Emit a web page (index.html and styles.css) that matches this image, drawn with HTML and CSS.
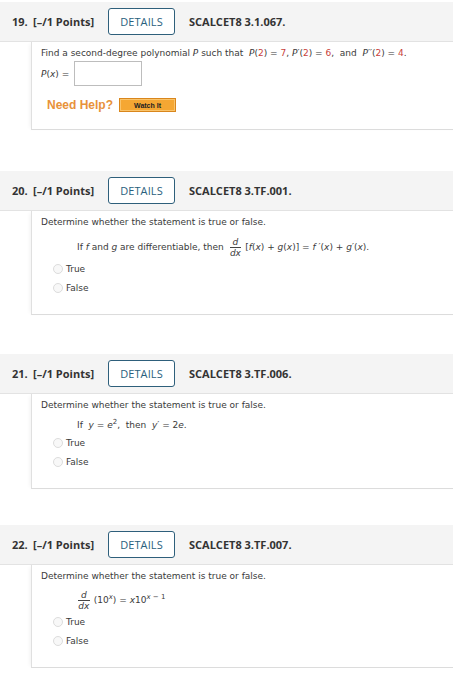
FILE: index.html
```html
<!DOCTYPE html>
<html>
<head>
<meta charset="utf-8">
<link rel="stylesheet" href="styles.css">
</head>
<body>
<div class="page">

  <section class="q q19">
    <div class="qhead">
      <span class="num">19.</span>
      <span class="pts">[–/1 Points]</span>
      <span class="details">DETAILS</span>
      <span class="code">SCALCET8 3.1.067.</span>
    </div>
    <div class="qbody">
      <p class="line">Find a second-degree polynomial <i>P</i> such that&nbsp; <i>P</i>(<span class="red">2</span>) = <span class="red">7</span>, <i>P</i>′(<span class="red">2</span>) = <span class="red">6</span>,&nbsp; and&nbsp; <i>P</i>′′(<span class="red">2</span>) = <span class="red">4</span>.</p>
      <div class="answer"><span><i>P</i>(<i>x</i>) =</span><span class="input"></span></div>
      <div class="help"><span class="needhelp">Need Help?</span><span class="watch">Watch It</span></div>
    </div>
  </section>

  <section class="q q20">
    <div class="qhead">
      <span class="num">20.</span>
      <span class="pts">[–/1 Points]</span>
      <span class="details">DETAILS</span>
      <span class="code">SCALCET8 3.TF.001.</span>
    </div>
    <div class="qbody">
      <p class="line">Determine whether the statement is true or false.</p>
      <div class="stmt frac-stmt">If <i>f</i> and <i>g</i> are differentiable, then&nbsp;<span class="frac"><span class="fn"><i>d</i></span><span class="fd"><i>dx</i></span></span>[<i>f</i>(<i>x</i>)&nbsp;+&nbsp;<i>g</i>(<i>x</i>)]&nbsp;=&nbsp;<i>f</i>&nbsp;′(<i>x</i>)&nbsp;+&nbsp;<i>g</i>′(<i>x</i>).</div>
      <div class="opt"><span class="radio"></span>True</div>
      <div class="opt"><span class="radio"></span>False</div>
    </div>
  </section>

  <section class="q q21">
    <div class="qhead">
      <span class="num">21.</span>
      <span class="pts">[–/1 Points]</span>
      <span class="details">DETAILS</span>
      <span class="code">SCALCET8 3.TF.006.</span>
    </div>
    <div class="qbody">
      <p class="line">Determine whether the statement is true or false.</p>
      <div class="stmt">If&nbsp; <i>y</i> = <i>e</i><sup>2</sup>,&nbsp; then&nbsp; <i>y</i>′ = 2<i>e</i>.</div>
      <div class="opt"><span class="radio"></span>True</div>
      <div class="opt"><span class="radio"></span>False</div>
    </div>
  </section>

  <section class="q q22">
    <div class="qhead">
      <span class="num">22.</span>
      <span class="pts">[–/1 Points]</span>
      <span class="details">DETAILS</span>
      <span class="code">SCALCET8 3.TF.007.</span>
    </div>
    <div class="qbody">
      <p class="line">Determine whether the statement is true or false.</p>
      <div class="stmt frac-stmt"><span class="frac"><span class="fn"><i>d</i></span><span class="fd"><i>dx</i></span></span>(10<sup><i>x</i></sup>) = <i>x</i>10<sup><i>x</i> − 1</sup></div>
      <div class="opt"><span class="radio"></span>True</div>
      <div class="opt"><span class="radio"></span>False</div>
    </div>
  </section>

</div>
</body>
</html>
```
FILE: styles.css
```css
html, body {
  margin: 0;
  padding: 0;
  background: #ffffff;
  overflow: hidden;
}
.page {
  width: 453px;
  overflow: hidden;
  padding-top: 2px;
}
.q {
  display: flex;
  flex-direction: column;
}
.q20 { margin-top: 41px; }
.q21 { margin-top: 39px; }
.q22 { margin-top: 36px; }

.qhead {
  height: 40px;
  box-sizing: border-box;
  background: #f4f4f4;
  border-bottom: 1px solid #e3e3e3;
  display: flex;
  align-items: center;
  padding-left: 12px;
  font-family: "Open Sans", "DejaVu Sans", sans-serif;
  font-size: 11px;
  color: #333;
  width: 470px;
}
.num { font-weight: 700; width: 21px; }
.pts { font-weight: 700; width: 75px; }
.details {
  display: flex;
  align-items: center;
  justify-content: center;
  box-sizing: border-box;
  width: 67px;
  height: 27px;
  border: 1.5px solid #2e5f7b;
  border-radius: 3px;
  background: #fff;
  color: #2a5f7d;
  font-weight: 500;
  font-size: 11px;
  letter-spacing: 0.1px;
}
.code { font-weight: 700; margin-left: 14px; }

.qbody {
  margin-left: 31px;
  width: 440px;
  border-left: 1px solid #e0e0e0;
  border-bottom: 1px solid #dcdcdc;
  box-shadow: -3px 0 4px -2px rgba(0,0,0,0.06);
  padding: 5px 0 0 9px;
  font-family: "DejaVu Sans", Verdana, sans-serif;
  font-size: 9px;
  color: #3a3a3a;
  display: flex;
  flex-direction: column;
  align-items: flex-start;
}
.line {
  margin: 0;
  line-height: 12px;
  white-space: nowrap;
}
.red { color: #c8413b; }

.answer {
  display: flex;
  align-items: center;
  gap: 5px;
  margin-top: 2px;
}
.input {
  width: 66px;
  height: 23px;
  border: 1px solid #bdbdbd;
  background: #fff;
  display: inline-block;
}
.help {
  display: flex;
  align-items: center;
  margin-top: 12px;
  margin-left: 6px;
  margin-bottom: 17px;
}
.needhelp {
  font-family: "Liberation Sans", Arial, sans-serif;
  font-weight: 700;
  font-size: 12px;
  color: #e8923a;
}
.watch {
  margin-left: 6px;
  width: 57px;
  height: 14px;
  box-sizing: border-box;
  background: #f5a733;
  border: 1px solid #d9861c;
  box-shadow: inset 0 0 0 1px #f9c46c;
  font-family: "Liberation Sans", Arial, sans-serif;
  font-weight: 700;
  font-size: 7px;
  color: #222;
  display: flex;
  align-items: center;
  justify-content: center;
}

.stmt {
  display: block;
  margin-left: 36px;
  margin-top: 8px;
  line-height: 12px;
  white-space: nowrap;
}
.frac-stmt {
  margin-top: 8px;
  line-height: 22px;
}
.frac {
  display: inline-flex;
  flex-direction: column;
  align-items: center;
  margin: 0 4px 0 3px;
  vertical-align: middle;
  line-height: 10px;
  font-size: 9px;
}
.fn {
  border-bottom: 1px solid #444;
  padding: 0 3px;
  text-align: center;
  width: 100%;
  box-sizing: border-box;
}
.q22 .frac-stmt { margin-left: 34px; margin-top: 7px; }
sup {
  font-size: 7px;
  line-height: 0;
  vertical-align: 4px;
}

.opt {
  display: flex;
  align-items: center;
  margin-left: 12px;
  line-height: 12px;
  margin-top: 7px;
}
.stmt + .opt { margin-top: 6px; }
.frac-stmt + .opt { margin-top: 5px; }
.radio {
  width: 8px;
  height: 8px;
  border-radius: 50%;
  border: 1px solid #dcdcdc;
  background: #f8f8f8;
  margin-right: 3px;
  display: inline-block;
}
.q20 .qbody { padding-bottom: 20px; }
.q21 .qbody { padding-bottom: 20px; }
.q22 .qbody { padding-bottom: 20px; }
```
